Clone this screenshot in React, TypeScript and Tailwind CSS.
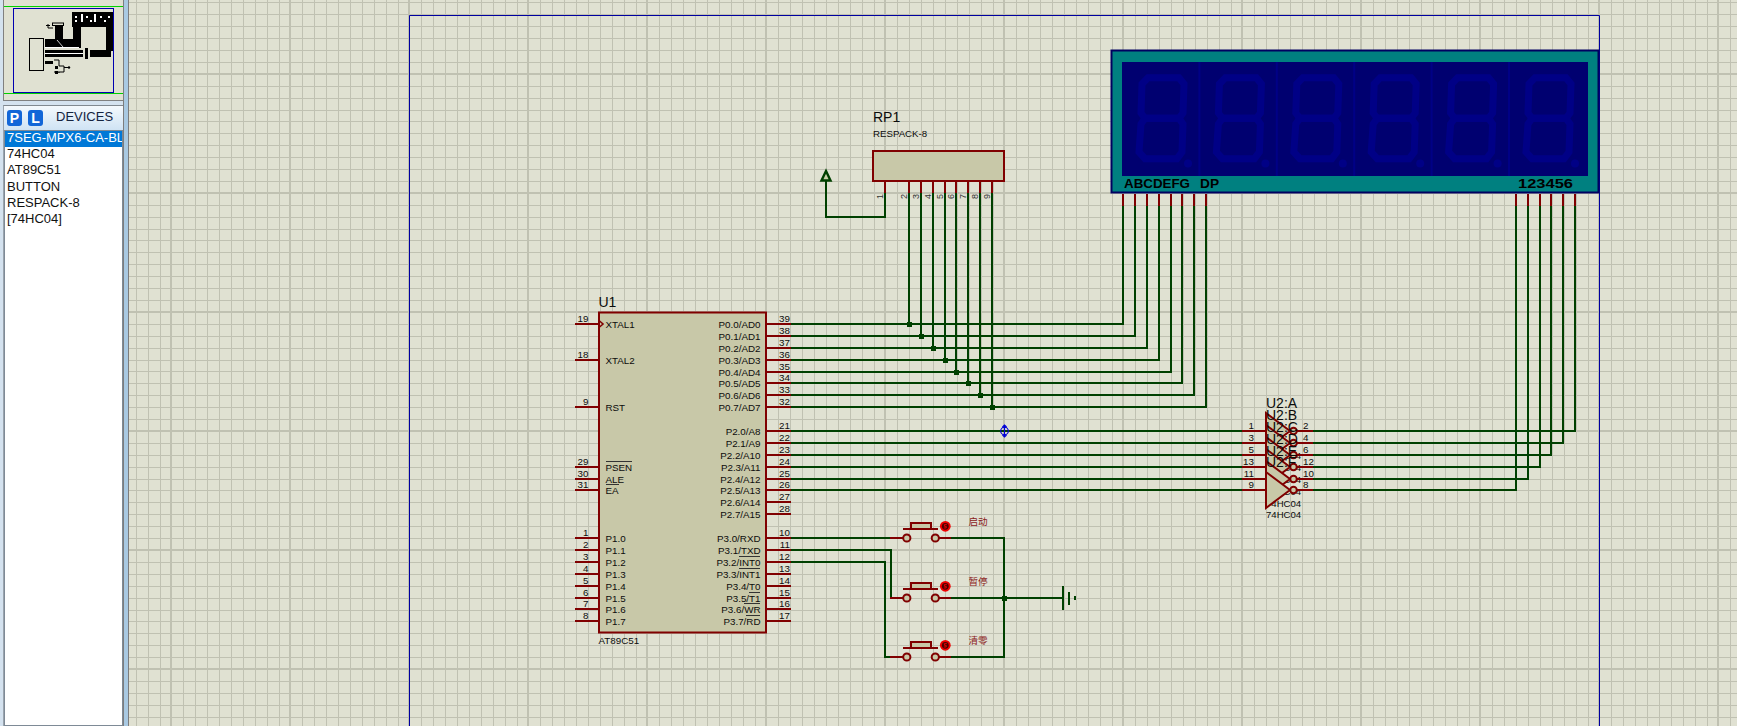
import React from "react";

const WIRE = "#004000";
const PIN = "#800000";
const BODY = "#c8c8a8";
const TXT = "#0c0c0c";

type PinRow = { n: string; label: string; y: number; bar?: [number, number] };

const rightPins: PinRow[] = [
  { n: "39", label: "P0.0/AD0", y: 324 },
  { n: "38", label: "P0.1/AD1", y: 336 },
  { n: "37", label: "P0.2/AD2", y: 348 },
  { n: "36", label: "P0.3/AD3", y: 360 },
  { n: "35", label: "P0.4/AD4", y: 372 },
  { n: "34", label: "P0.5/AD5", y: 383 },
  { n: "33", label: "P0.6/AD6", y: 395 },
  { n: "32", label: "P0.7/AD7", y: 407 },
  { n: "21", label: "P2.0/A8", y: 431 },
  { n: "22", label: "P2.1/A9", y: 443 },
  { n: "23", label: "P2.2/A10", y: 455 },
  { n: "24", label: "P2.3/A11", y: 467 },
  { n: "25", label: "P2.4/A12", y: 479 },
  { n: "26", label: "P2.5/A13", y: 490 },
  { n: "27", label: "P2.6/A14", y: 502 },
  { n: "28", label: "P2.7/A15", y: 514 },
  { n: "10", label: "P3.0/RXD", y: 538 },
  { n: "11", label: "P3.1/TXD", y: 550 },
  { n: "12", label: "P3.2/INT0", y: 562, bar: [739, 760] },
  { n: "13", label: "P3.3/INT1", y: 574, bar: [739, 760] },
  { n: "14", label: "P3.4/T0", y: 586 },
  { n: "15", label: "P3.5/T1", y: 598, bar: [749, 760] },
  { n: "16", label: "P3.6/WR", y: 609, bar: [744, 760] },
  { n: "17", label: "P3.7/RD", y: 621, bar: [746, 760] },
];

const leftPins: PinRow[] = [
  { n: "19", label: "XTAL1", y: 324 },
  { n: "18", label: "XTAL2", y: 360 },
  { n: "9", label: "RST", y: 407 },
  { n: "29", label: "PSEN", y: 467, bar: [606, 632] },
  { n: "30", label: "ALE", y: 479 },
  { n: "31", label: "EA", y: 490, bar: [606, 619] },
  { n: "1", label: "P1.0", y: 538 },
  { n: "2", label: "P1.1", y: 550 },
  { n: "3", label: "P1.2", y: 562 },
  { n: "4", label: "P1.3", y: 574 },
  { n: "5", label: "P1.4", y: 586 },
  { n: "6", label: "P1.5", y: 598 },
  { n: "7", label: "P1.6", y: 609 },
  { n: "8", label: "P1.7", y: 621 },
];

const rpPins = [885, 909, 921, 933, 945, 956, 968, 980, 992];
const segPins = [1123, 1135, 1147, 1159, 1171, 1182, 1194, 1206];
const digitPins = [1575, 1563, 1551, 1540, 1528, 1516];
const gates = [
  { s: "A", y: 431, a: "1", b: "2" },
  { s: "B", y: 443, a: "3", b: "4" },
  { s: "C", y: 455, a: "5", b: "6" },
  { s: "D", y: 467, a: "13", b: "12" },
  { s: "E", y: 479, a: "11", b: "10" },
  { s: "F", y: 490, a: "9", b: "8" },
];
const buttons = [
  { y: 538, name: "启动", ty: 524.5 },
  { y: 598, name: "暂停", ty: 584.5 },
  { y: 657, name: "清零", ty: 643.5 },
];

const range = (from: number, to: number) => {
  const out: number[] = [];
  for (let i = from; i <= to; i++) out.push(i);
  return out;
};

const Grid = () => (
  <g fill="#c0c1b2">
    {range(-3, 135).map((k) => {
      const x = Math.round(171.4 + k * 11.9);
      return <rect key={k} x={k % 10 === 0 ? x - 1 : x} y={0} width={k % 10 === 0 ? 2 : 1} height={726} />;
    })}
    {range(-6, 55).map((k) => {
      const y = Math.round(73.8 + k * 11.905);
      return <rect key={k} x={129} y={k % 10 === 0 ? y - 1 : y} width={1608} height={k % 10 === 0 ? 2 : 1} />;
    })}
  </g>
);

const Wires = () => (
  <g fill="none" stroke={WIRE} strokeWidth={2} shapeRendering="crispEdges">
    {rightPins.slice(0, 8).map((p, i) => (
      <path key={p.n} d={`M791 ${p.y}H${segPins[i]}V206`} />
    ))}
    {rpPins.slice(1).map((x, i) => (
      <path key={x} d={`M${x} 193V${rightPins[i].y}`} />
    ))}
    {rightPins.slice(0, 8).map((p, i) => (
      <rect key={p.n} x={rpPins[i + 1] - 2.5} y={p.y - 2.5} width={5} height={5} fill={WIRE} stroke="none" />
    ))}
    {rightPins.slice(8, 14).map((p) => (
      <path key={p.n} d={`M791 ${p.y}H1242`} />
    ))}
    {gates.map((g, i) => (
      <path key={g.s} d={`M1313 ${g.y}H${digitPins[i]}V206`} />
    ))}
    <path d="M885 193V217H826V179" />
    <path d="M791 538H890" />
    <path d="M791 550H891V598H890" />
    <path d="M791 562H885V657H890" />
    <path d="M951 538H1004V657H951" />
    <path d="M951 598H1063" />
    <path d="M1063 586V610" />
    <path d="M1069 592V605" />
    <path d="M1075 596V600" />
    <rect x={1001.5} y={595.5} width={5} height={5} fill={WIRE} stroke="none" />
  </g>
);

const Chip = () => (
  <g>
    <rect x={599} y={312.5} width={167} height={320} fill={BODY} stroke={PIN} strokeWidth={2} />
    <g stroke={PIN} strokeWidth={2} shapeRendering="crispEdges">
      {rightPins.map((p) => (
        <line key={p.n} x1={767} x2={791} y1={p.y} y2={p.y} />
      ))}
      {leftPins.map((p) => (
        <line key={p.n} x1={575} x2={598} y1={p.y} y2={p.y} />
      ))}
    </g>
    <path d="M599 320.5L603 324L599 327.5" fill="none" stroke={PIN} strokeWidth={1.6} />
    <g fontSize={9.8} fill={TXT}>
      {rightPins.map((p) => (
        <g key={p.n}>
          <text x={760.5} y={p.y + 4} textAnchor="end">{p.label}</text>
          <text x={790} y={p.y - 2} textAnchor="end">{p.n}</text>
          {p.bar && <line x1={p.bar[0]} x2={p.bar[1]} y1={p.y - 5.5} y2={p.y - 5.5} stroke="#333" strokeWidth={1} />}
        </g>
      ))}
      {leftPins.map((p) => (
        <g key={p.n}>
          <text x={605.5} y={p.y + 4}>{p.label}</text>
          <text x={588.5} y={p.y - 2} textAnchor="end">{p.n}</text>
          {p.bar && <line x1={p.bar[0]} x2={p.bar[1]} y1={p.y - 5.5} y2={p.y - 5.5} stroke="#333" strokeWidth={1} />}
        </g>
      ))}
      <text x={598.5} y={643.5}>AT89C51</text>
    </g>
    <text x={598.5} y={306.5} fontSize={14} fill={TXT}>U1</text>
  </g>
);

const Respack = () => (
  <g>
    <rect x={873} y={151} width={131} height={30} fill={BODY} stroke={PIN} strokeWidth={2} />
    <g stroke={PIN} strokeWidth={2} shapeRendering="crispEdges">
      {rpPins.map((x) => (
        <line key={x} x1={x} x2={x} y1={182} y2={193} />
      ))}
    </g>
    {rpPins.map((x, i) => (
      <text key={x} transform={`translate(${x - 2.5} 196.5) rotate(-90)`} textAnchor="middle" fontSize={9} fill="#333">
        {i + 1}
      </text>
    ))}
    <path d="M826 171L830.5 180.5H821.5Z" fill="#c8d0a8" stroke={WIRE} strokeWidth={2.4} />
    <text x={873} y={122} fontSize={14} fill={TXT}>RP1</text>
    <text x={873} y={136.5} fontSize={9.7} fill={TXT}>RESPACK-8</text>
  </g>
);

const Display = () => (
  <g>
    <rect x={1111.5} y={50.5} width={487} height={142} fill="#008080" stroke="#000060" strokeWidth={2} />
    <rect x={1122} y={62} width={466} height={114} fill="#000070" />
    {range(0, 5).map((i) => {
      const dx = 1122 + i * 77.4;
      return (
        <g key={i} transform={`translate(${dx} 0)`}>
          <g fill="none" stroke="#000086" strokeWidth={7}>
            <path d="M20 84L26 77.7H57L62 84L61 113L57 118.3H23L19 113Z" />
            <path d="M19 124L23 118.3H57L61 124L60 152L55 158.7H23L17 152Z" />
          </g>
          <circle cx={66} cy={163.5} r={4} fill="#000086" />
          {i > 0 && <rect x={-1} y={62} width={2} height={114} fill="#000086" />}
        </g>
      );
    })}
    <g fontSize={13} fontWeight={700} fill="#000">
      <text x={1124} y={188} textLength={66} lengthAdjust="spacingAndGlyphs">ABCDEFG</text>
      <text x={1200} y={188} textLength={19} lengthAdjust="spacingAndGlyphs">DP</text>
      <text x={1518} y={188} textLength={55} lengthAdjust="spacingAndGlyphs">123456</text>
    </g>
    <g stroke={PIN} strokeWidth={2} shapeRendering="crispEdges">
      {[...segPins, ...digitPins].map((x) => (
        <line key={x} x1={x} x2={x} y1={194} y2={206} />
      ))}
    </g>
  </g>
);

const Inverters = () => (
  <g>
    {gates.map((g) => (
      <g key={g.s}>
        <g stroke={PIN} strokeWidth={2}>
          <line x1={1242} x2={1266} y1={g.y} y2={g.y} />
          <line x1={1297} x2={1313} y1={g.y} y2={g.y} />
          <path d={`M1266 ${g.y - 18}L1290 ${g.y}L1266 ${g.y + 18}Z`} fill={BODY} />
          <circle cx={1293.5} cy={g.y} r={3.3} fill={BODY} />
        </g>
        <text x={1254} y={g.y - 2.5} textAnchor="end" fontSize={9.8} fill={TXT}>{g.a}</text>
        <text x={1303} y={g.y - 2.5} fontSize={9.8} fill={TXT}>{g.b}</text>
        <text x={1266} y={g.y - 23} fontSize={14} fill={TXT}>U2:{g.s}</text>
        <text x={1266} y={g.y + 28} fontSize={9.6} fill={TXT}>74HC04</text>
      </g>
    ))}
  </g>
);

const Buttons = () => (
  <g>
    {buttons.map((b) => (
      <g key={b.name}>
        <g stroke={PIN} strokeWidth={2}>
          <line x1={890} x2={903} y1={b.y} y2={b.y} />
          <line x1={939} x2={951} y1={b.y} y2={b.y} />
          <circle cx={906.8} cy={b.y} r={3.6} fill={BODY} />
          <circle cx={935.3} cy={b.y} r={3.6} fill={BODY} />
          <line x1={903} x2={938} y1={b.y - 9} y2={b.y - 9} />
          <rect x={911} y={b.y - 15} width={20} height={6} fill={BODY} />
        </g>
        <circle cx={945.3} cy={b.y - 11.7} r={5.4} fill="#f00000" />
        <circle cx={945.3} cy={b.y - 11.7} r={3.4} fill="#4a0000" />
        <path d={`M946.8 ${b.y - 13.4}H944.4V${b.y - 11.7}H946.2V${b.y - 10}H943.8`} fill="none" stroke="#f00000" strokeWidth={0.9} />
        <text x={968.5} y={b.ty} fontSize={9.6} fill="#8a2020" className="font-['Noto_Sans_CJK_SC',sans-serif]">
          {b.name}
        </text>
      </g>
    ))}
  </g>
);

const Schematic = () => (
  <svg viewBox="129 0 1608 726" width={1608} height={726} className="block font-['Liberation_Sans',Arial,sans-serif]">
    <rect x={129} y={0} width={1608} height={726} fill="#e0e1d2" />
    <Grid />
    <path d="M409.5 726V15.5H1599.5V726" fill="none" stroke="#0000a0" strokeWidth={1} />
    <Wires />
    <Display />
    <Respack />
    <Chip />
    <Inverters />
    <Buttons />
    <g fill="none" stroke="#0000d8" strokeWidth={1.2}>
      <circle cx={1004.5} cy={431} r={3.8} />
      <path d="M1004.5 425V437M1002.5 427L1004.5 425L1006.5 427M1002.5 435L1004.5 437L1006.5 435" />
    </g>
  </svg>
);

// little overview of the sheet, hand traced
const Preview = () => (
  <svg viewBox="4 0 119 100" width={119} height={100} className="block">
    <rect x={4} y={0} width={119} height={100} fill="#e0e1d2" />
    <line x1={4} x2={123} y1={6.5} y2={6.5} stroke="#00d000" />
    <line x1={4} x2={123} y1={93.5} y2={93.5} stroke="#00d000" />
    <rect x={13.5} y={8.5} width={100} height={84} fill="none" stroke="#0000b0" />
    <rect x={29.5} y={38.5} width={14} height={32} fill="#e0e1d2" stroke="#000" />
    <g fill="#000" shapeRendering="crispEdges">
      <rect x={72} y={12} width={41} height={15} />
      <rect x={73} y={27} width={8} height={21} />
      <rect x={55} y={26} width={8} height={14} />
      <rect x={45} y={39} width={36} height={9} />
      <rect x={106} y={27} width={6.5} height={24} />
      <rect x={90} y={50} width={21} height={7} />
      <rect x={45} y={50} width={38} height={7} />
      <rect x={85} y={48} width={3} height={11} />
      <rect x={45} y={61} width={8} height={3} />
      <rect x={55} y={66} width={3} height={3} />
      <rect x={55} y={71} width={3} height={3} />
    </g>
    <g fill="#fff" shapeRendering="crispEdges">
      <rect x={75} y={16} width={2} height={2} />
      <rect x={75} y={20} width={2} height={2} />
      <rect x={81} y={14} width={2} height={8} />
      <rect x={86} y={16} width={2} height={2} />
      <rect x={90} y={20} width={2} height={2} />
      <rect x={94} y={14} width={2} height={8} />
      <rect x={100} y={16} width={2} height={2} />
      <rect x={104} y={20} width={2} height={2} />
      <rect x={108} y={16} width={2} height={2} />
      <rect x={45} y={47} width={34} height={1} />
      <rect x={45} y={53} width={38} height={1} />
    </g>
    <path d="M57 40L63 47" stroke="#fff" strokeWidth={0.8} fill="none" />
    <path d="M106 50L112 50L107 57L105 57Z" fill="#000" />
    <rect x={52.5} y={23} width={11} height={2.5} fill="#e0e1d2" stroke="#000" />
    <path d="M48 24V28H53M46 25.5H50M54 60H59V66M54 72H59V73M59 66H64V72H59M64 67.5H70" fill="none" stroke="#000" />
    <circle cx={69} cy={67.5} r={1.2} fill="#000" />
  </svg>
);

const devices = ["74HC04", "AT89C51", "BUTTON", "RESPACK-8", "[74HC04]"];

const Sidebar = () => (
  <aside className="flex h-full w-[123px] shrink-0 flex-col bg-[#d4e2ef] pl-[3px] font-['Liberation_Sans',Arial,sans-serif]">
    <div className="h-[101px] shrink-0 overflow-hidden border-b border-l border-[#808080]">
      <Preview />
    </div>
    <div className="mt-[4px] flex min-h-0 flex-1 flex-col border-l border-[#9aa4ae] border-t border-t-[#808890]">
      <div className="flex h-[24px] shrink-0 items-center bg-gradient-to-b from-[#f4f9fd] to-[#cfe3f4] pl-[3px]">
        <span className="flex h-[16px] w-[15px] items-center justify-center rounded-[3px] bg-[#1166d8] text-[14px] font-bold text-white">
          P
        </span>
        <span className="ml-[6px] flex h-[16px] w-[15px] items-center justify-center rounded-[3px] bg-[#1166d8] text-[14px] font-bold text-white">
          L
        </span>
        <span className="ml-[13px] -translate-y-px text-[13px] text-[#14233f]">DEVICES</span>
      </div>
      <div className="min-h-0 flex-1 overflow-hidden border border-[#7e8a96] bg-white text-[13px] leading-[16.2px] text-[#111]">
        <div className="overflow-hidden whitespace-nowrap bg-[#0078d7] pl-[2px] text-white">
          <span className="block -translate-y-px">7SEG-MPX6-CA-BLUE</span>
        </div>
        {devices.map((d) => (
          <div key={d} className="-translate-y-px pl-[2px]">
            {d}
          </div>
        ))}
      </div>
    </div>
  </aside>
);

export default function App() {
  return (
    <div className="flex h-[726px] w-[1737px] overflow-hidden bg-white">
      <Sidebar />
      <div className="h-full w-[6px] shrink-0 border-x border-[#7d7d7d] bg-[#a9c9e2]" />
      <Schematic />
    </div>
  );
}
